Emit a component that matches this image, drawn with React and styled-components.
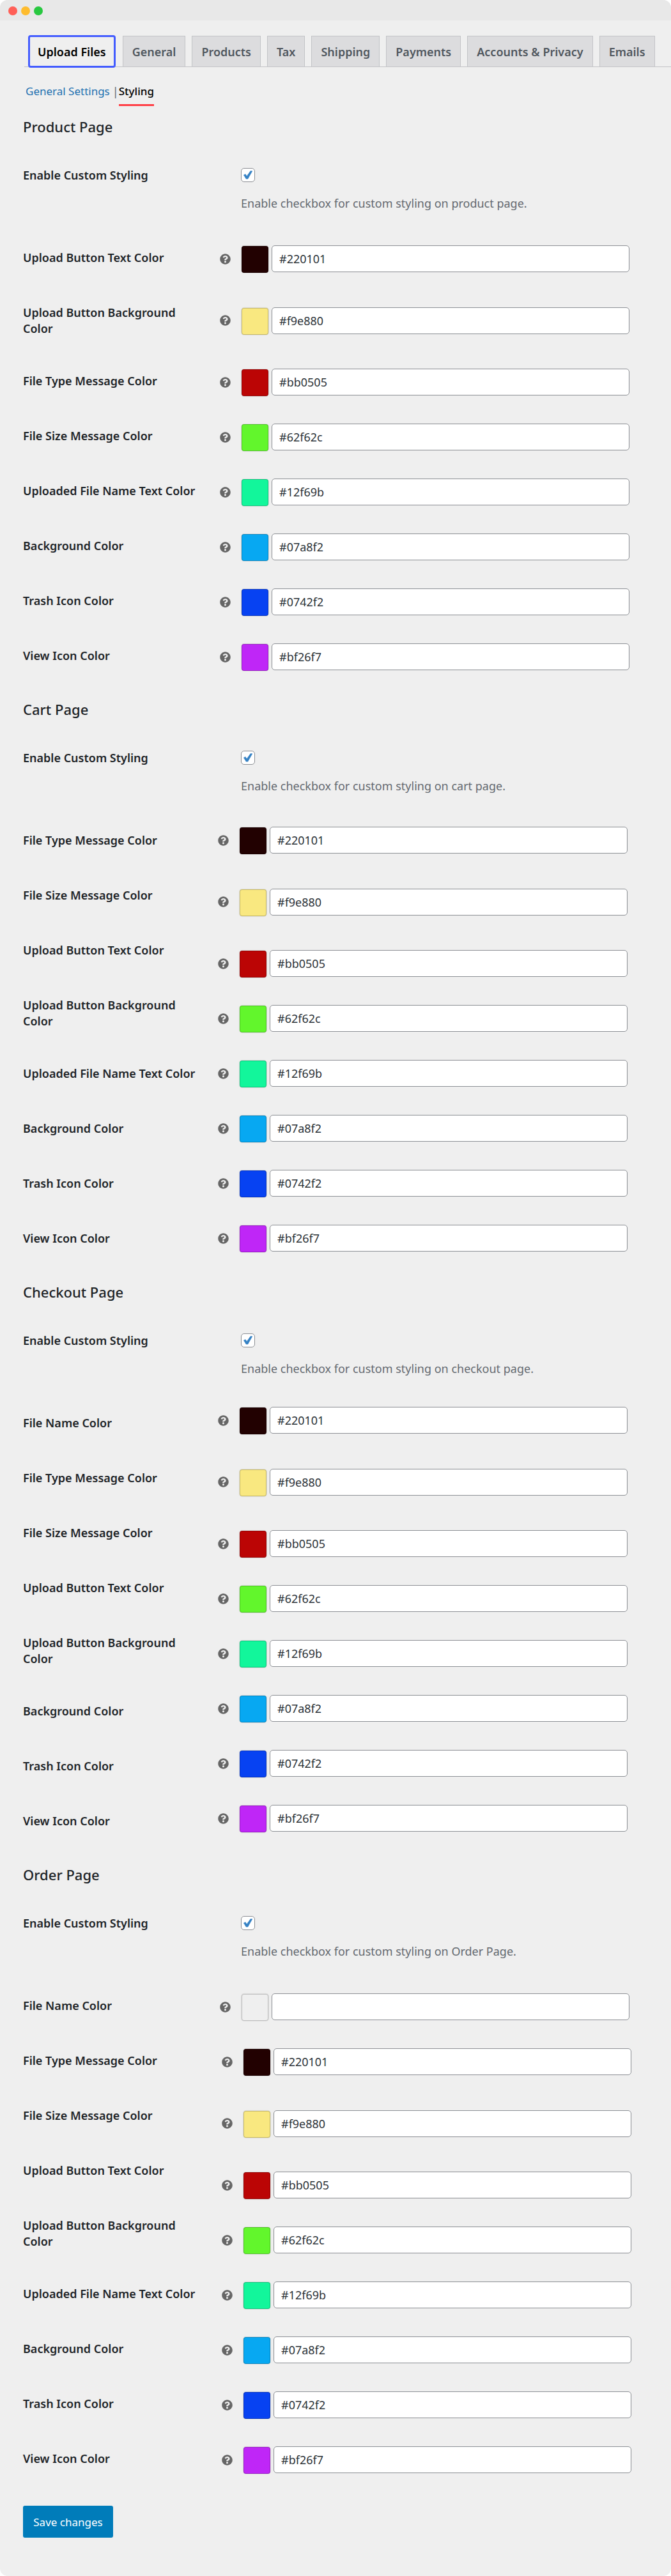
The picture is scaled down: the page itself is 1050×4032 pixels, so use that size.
import React, { useState } from 'react';
import styled, { createGlobalStyle } from 'styled-components';
import { FaQuestionCircle } from 'react-icons/fa';

const GlobalStyle = createGlobalStyle`
  * {
    box-sizing: border-box;
  }

  body {
    margin: 0;
    background: #fff;
    color: #1d2327;
    font-family: 'Noto Sans', 'Open Sans', sans-serif;
    font-size: 18px;
    line-height: 25px;
  }
`;

const Window = styled.div`
  background: #efefef;
  border-radius: 12px;
  overflow: hidden;
`;

const TitleBar = styled.header`
  height: 32px;
  padding: 2px 0 0 13px;
  display: flex;
  align-items: center;
  gap: 6px;
  background: #e8e8e8;
`;

const Light = styled.span`
  width: 14px;
  height: 14px;
  border-radius: 50%;
  background: ${props => props.$color};
`;

const Tabs = styled.nav`
  margin: 24px 0 0 38px;
  padding-left: 6px;
  display: flex;
  gap: 10px;
  border-bottom: 1px solid #c3c4c7;
`;

const Tab = styled.a`
  height: 48px;
  padding: 0 14px;
  border: 1px solid #c3c4c7;
  border-bottom: 0;
  background: #dcdcde;
  color: #50575e;
  font-weight: 600;
  line-height: 49px;
  text-decoration: none;
  white-space: nowrap;
`;

const ActiveTab = styled(Tab)`
  height: 51px;
  margin: -1px 1px -2px 0;
  padding: 0 12px;
  border: 3px solid #435cff;
  border-radius: 4px;
  background: #efefef;
  color: #000;
  line-height: 46px;
`;

const SubNav = styled.nav`
  padding: 25px 0 0 40px;
  display: flex;
  height: 78px;
  line-height: 26px;
`;

const SubLink = styled.a`
  color: #2271b1;
  font-size: 17px;
  text-decoration: none;
`;

const Divider = styled.span`
  margin-left: 4px;
  color: #646970;
`;

const CurrentLink = styled(SubLink)`
  height: 36px;
  border-bottom: 3px solid #ff3d44;
  color: #000;
  font-weight: 500;
`;

const Form = styled.form`
  padding: 0 36px 60px;
`;

const SectionWrapper = styled.section`
  padding-bottom: 24px;
`;

const Title = styled.h2`
  margin: 0;
  font-size: 22px;
  font-weight: 500;
  line-height: 30px;
`;

const EnableRow = styled.div`
  padding-top: 48px;
  padding-bottom: ${props => 31 - props.$lift}px;
  display: grid;
  grid-template-columns: 341px 1fr;
`;

const EnableLabel = styled.label`
  font-weight: 600;
  line-height: 26px;
`;

const CheckWrapper = styled.div`
  position: relative;
  width: 22px;
  height: 22px;
  margin: 2px 0 20px;

  svg {
    position: absolute;
    top: 2px;
    left: 2px;
    pointer-events: none;
  }
`;

const CheckBox = styled.input`
  appearance: none;
  display: block;
  width: 22px;
  height: 22px;
  margin: 0;
  border: 1px solid #8c8f94;
  border-radius: 5px;
  background: #fff;
`;

const Description = styled.p`
  margin: 0;
  color: #646970;
  line-height: 26px;
`;

const Fields = styled.div`
  display: flex;
`;

const Labels = styled.div`
  width: 305px;
  padding-top: ${props => props.$lift}px;
  flex: none;
`;

const FieldLabel = styled.label`
  display: block;
  width: 284px;
  min-height: 86px;
  padding: 29px 0 28px;
  font-weight: 600;
`;

const Controls = styled.div`
  flex: 1;
`;

const Control = styled.div`
  max-width: 647px;
  height: ${props => (props.$tall ? 107 : 86)}px;
  padding-left: ${props => props.$indent}px;
  display: flex;
  align-items: center;
`;

const HelpIcon = styled(FaQuestionCircle)`
  width: 17px;
  height: 17px;
  flex: none;
  color: #666;
`;

const Swatch = styled.span`
  width: 42px;
  height: 42px;
  margin: 2px 5px 0 17px;
  flex: none;
  border-radius: 4px;
  box-shadow: inset 0 0 0 1px rgba(0, 0, 0, 0.2), 0 0 1px 1px rgba(0, 0, 0, 0.08);
`;

const ColorInput = styled.input`
  width: 100%;
  max-width: 560px;
  height: 42px;
  padding: 0 11px;
  border: 1px solid #8c8f94;
  border-radius: 5px;
  background: #fff;
  color: #2c3338;
  font-family: inherit;
  font-size: 18px;
`;

const SaveButton = styled.button`
  min-width: 141px;
  height: 50px;
  margin-top: 5px;
  padding: 0 16px;
  border: 0;
  border-radius: 3px;
  background: #007cba;
  color: #fff;
  font-family: inherit;
  font-size: 17px;
`;

const tabs = ['General', 'Products', 'Tax', 'Shipping', 'Payments', 'Accounts & Privacy', 'Emails'];

const palette = ['#220101', '#f9e880', '#bb0505', '#62f62c', '#12f69b', '#07a8f2', '#0742f2', '#bf26f7'];

// lift raises the controls against their labels, indent moves them sideways
const sections = [
  {
    id: 'product',
    title: 'Product Page',
    place: 'product page',
    labels: [
      'Upload Button Text Color',
      'Upload Button Background Color',
      'File Type Message Color',
      'File Size Message Color',
      'Uploaded File Name Text Color',
      'Background Color',
      'Trash Icon Color',
      'View Icon Color',
    ],
    colors: palette,
    tallRow: 1,
    lift: 0,
    indent: 3,
  },
  {
    id: 'cart',
    title: 'Cart Page',
    place: 'cart page',
    labels: [
      'File Type Message Color',
      'File Size Message Color',
      'Upload Button Text Color',
      'Upload Button Background Color',
      'Uploaded File Name Text Color',
      'Background Color',
      'Trash Icon Color',
      'View Icon Color',
    ],
    colors: palette,
    tallRow: 1,
    lift: 2,
    indent: 0,
  },
  {
    id: 'checkout',
    title: 'Checkout Page',
    place: 'checkout page',
    labels: [
      'File Name Color',
      'File Type Message Color',
      'File Size Message Color',
      'Upload Button Text Color',
      'Upload Button Background Color',
      'Background Color',
      'Trash Icon Color',
      'View Icon Color',
    ],
    colors: palette,
    tallRow: 1,
    lift: 6,
    indent: 0,
  },
  {
    id: 'order',
    title: 'Order Page',
    place: 'Order Page',
    labels: [
      'File Name Color',
      'File Type Message Color',
      'File Size Message Color',
      'Upload Button Text Color',
      'Upload Button Background Color',
      'Uploaded File Name Text Color',
      'Background Color',
      'Trash Icon Color',
      'View Icon Color',
    ],
    colors: ['', ...palette],
    tallRow: 2,
    lift: 0,
    indent: 6,
  },
];

const ColorControl = (props) => {
  const [color, setColor] = useState(props.color);

  return (
    <Control $tall={props.tall} $indent={props.indent}>
      <HelpIcon />
      <Swatch style={{ background: color || 'transparent' }} />
      <ColorInput
        id={props.id}
        type="text"
        value={color}
        onChange={e => setColor(e.target.value)}
      />
    </Control>
  );
}

const Section = ({ section }) => {
  const [enabled, setEnabled] = useState(true);
  const { id, title, place, labels, colors, tallRow, lift, indent } = section;

  return (
    <SectionWrapper>
      <Title>{title}</Title>
      <EnableRow $lift={lift}>
        <EnableLabel htmlFor={`${id}-enable`}>Enable Custom Styling</EnableLabel>
        <div>
          <CheckWrapper>
            <CheckBox
              id={`${id}-enable`}
              type="checkbox"
              checked={enabled}
              onChange={e => setEnabled(e.target.checked)}
            />
            {enabled && (
              <svg width="18" height="18" viewBox="0 0 18 18">
                <path d="M2.4 9 L5 7.6 L7.2 10.8 L13 2.6 L15.8 2.8 L8.8 15 L6.2 15 Z" fill="#3582c4" stroke="#3582c4" strokeWidth="0.6" strokeLinejoin="round" />
              </svg>
            )}
          </CheckWrapper>
          <Description>Enable checkbox for custom styling on {place}.</Description>
        </div>
      </EnableRow>
      <Fields>
        <Labels $lift={lift}>
          {labels.map((label, i) => (
            <FieldLabel key={label} htmlFor={`${id}-color-${i}`}>{label}</FieldLabel>
          ))}
        </Labels>
        <Controls>
          {colors.map((color, i) => (
            <ColorControl
              key={i}
              id={`${id}-color-${i}`}
              color={color}
              tall={i === tallRow}
              indent={color ? indent : 3}
            />
          ))}
        </Controls>
      </Fields>
    </SectionWrapper>
  );
}

const App = () => (
  <>
    <GlobalStyle />
    <Window>
      <TitleBar>
        <Light $color="#ff5f57" />
        <Light $color="#febc2e" />
        <Light $color="#28c840" />
      </TitleBar>
      <Tabs>
        <ActiveTab href="#upload-files">Upload Files</ActiveTab>
        {tabs.map(tab => <Tab key={tab} href="#tab">{tab}</Tab>)}
      </Tabs>
      <SubNav>
        <SubLink href="#general-settings">General Settings</SubLink>
        <Divider>|</Divider>
        <CurrentLink href="#styling">Styling</CurrentLink>
      </SubNav>
      <Form onSubmit={e => e.preventDefault()}>
        {sections.map(section => <Section key={section.id} section={section} />)}
        <SaveButton type="submit">Save changes</SaveButton>
      </Form>
    </Window>
  </>
);

export default App;
